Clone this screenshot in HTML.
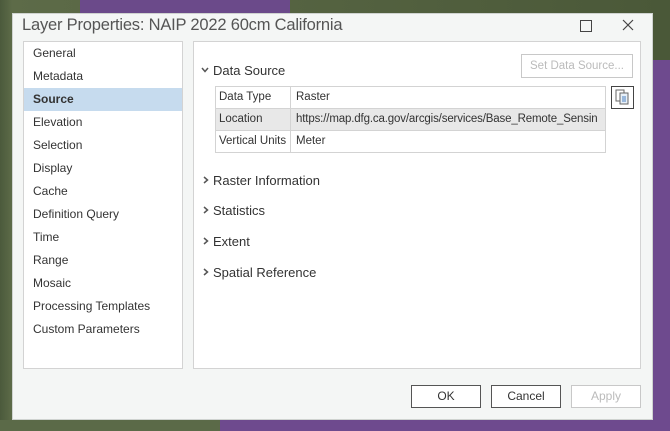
<!DOCTYPE html>
<html><head><style>
body{margin:0;width:670px;height:431px;overflow:hidden;position:relative;font-family:"Liberation Sans",sans-serif;
background:linear-gradient(90deg,#4b5a3c 0,#5d6b48 12px,#4a5838 100%);}
.abs{position:absolute}
.dlg{left:12px;top:13px;width:641px;height:407px;background:#f4f6f5;border:1px solid #cfd3d0;box-sizing:border-box}
.title{left:22px;top:16px;font-size:16.5px;color:#555;letter-spacing:-0.2px}
.list{left:23px;top:41px;width:160px;height:328px;background:#fff;border:1px solid #d3d3d3;box-sizing:border-box}
.list div{height:23px;line-height:23px;padding-left:9px;font-size:12px;color:#333}
.list .sel{background:#c6dbee;font-weight:bold}
.panel{left:193px;top:41px;width:448px;height:328px;background:#fff;border:1px solid #d3d3d3;box-sizing:border-box}
.hd{font-size:13px;color:#333}
.arr{position:absolute}
table{border-collapse:collapse;font-size:11.5px;color:#333;table-layout:fixed}
td{border:1px solid #d3d3d3;height:21px;line-height:21px;padding:0 0 0 3px;white-space:nowrap;overflow:hidden}
.btn{border:1px solid #555;background:#fff;font-size:12px;color:#333;text-align:center;line-height:21px;box-sizing:border-box;height:23px}
</style></head><body>
<div class="abs" style="left:80px;top:0;width:210px;height:13px;background:#6b4a8a"></div>
<div class="abs" style="left:653px;top:60px;width:17px;height:371px;background:#6e4a8e"></div>
<div class="abs" style="left:220px;top:420px;width:450px;height:11px;background:#6e4a8e"></div>
<div class="abs" style="left:0;top:420px;width:220px;height:11px;background:#5b6a48"></div>
<div class="abs dlg"></div>
<div class="abs title">Layer Properties: NAIP 2022 60cm California</div>
<div class="abs" style="left:580px;top:20px;width:10px;height:10px;border:1px solid #444"></div>
<svg class="abs" style="left:622px;top:19px" width="12" height="12"><path d="M1 1L11 11M11 1L1 11" stroke="#444" stroke-width="1.2"/></svg>
<div class="abs list">
<div>General</div><div>Metadata</div><div class="sel">Source</div><div>Elevation</div><div>Selection</div><div>Display</div><div>Cache</div><div>Definition Query</div><div>Time</div><div>Range</div><div>Mosaic</div><div>Processing Templates</div><div>Custom Parameters</div>
</div>
<div class="abs panel"></div>
<svg class="arr" style="left:201px;top:67px" width="8" height="6"><path d="M1 1L4 4.5L7 1" stroke="#555" stroke-width="1.5" fill="none"/></svg>
<div class="abs hd" style="left:213px;top:63px">Data Source</div>
<div class="abs" style="left:521px;top:54px;width:112px;height:24px;border:1px solid #c8c8c8;box-sizing:border-box;font-size:11.5px;color:#bbb;text-align:center;line-height:22px">Set Data Source...</div>
<table class="abs" style="left:215px;top:86px;width:390px">
<colgroup><col style="width:75px"><col style="width:315px"></colgroup>
<tr><td>Data Type</td><td style="padding-left:5px">Raster</td></tr>
<tr style="background:#e8e8e8"><td>Location</td><td style="padding-left:5px;letter-spacing:-0.15px">https://map.dfg.ca.gov/arcgis/services/Base_Remote_Sensin</td></tr>
<tr><td>Vertical Units</td><td style="padding-left:5px">Meter</td></tr>
</table>
<div class="abs" style="left:611px;top:86px;width:23px;height:23px;border:1px solid #444;box-sizing:border-box;background:#fff">
<svg width="21" height="21"><rect x="4" y="3" width="8" height="11" fill="#fff" stroke="#666"/><rect x="8" y="6" width="8" height="11" fill="#e8f0f8" stroke="#666"/><path d="M10 10h4M10 12h4M10 14h4" stroke="#4a7fc0"/></svg></div>
<svg class="arr" style="left:203px;top:176px" width="6" height="8"><path d="M1 1L4.5 4L1 7" stroke="#555" stroke-width="1.5" fill="none"/></svg><div class="abs hd" style="left:213px;top:173px">Raster Information</div>
<svg class="arr" style="left:203px;top:206px" width="6" height="8"><path d="M1 1L4.5 4L1 7" stroke="#555" stroke-width="1.5" fill="none"/></svg><div class="abs hd" style="left:213px;top:203px">Statistics</div>
<svg class="arr" style="left:203px;top:237px" width="6" height="8"><path d="M1 1L4.5 4L1 7" stroke="#555" stroke-width="1.5" fill="none"/></svg><div class="abs hd" style="left:213px;top:234px">Extent</div>
<svg class="arr" style="left:203px;top:268px" width="6" height="8"><path d="M1 1L4.5 4L1 7" stroke="#555" stroke-width="1.5" fill="none"/></svg><div class="abs hd" style="left:213px;top:265px">Spatial Reference</div>
<div class="abs btn" style="left:411px;top:385px;width:70px">OK</div>
<div class="abs btn" style="left:491px;top:385px;width:70px">Cancel</div>
<div class="abs btn" style="left:571px;top:385px;width:70px;border-color:#c8c8c8;color:#bbb">Apply</div>
</body></html>
